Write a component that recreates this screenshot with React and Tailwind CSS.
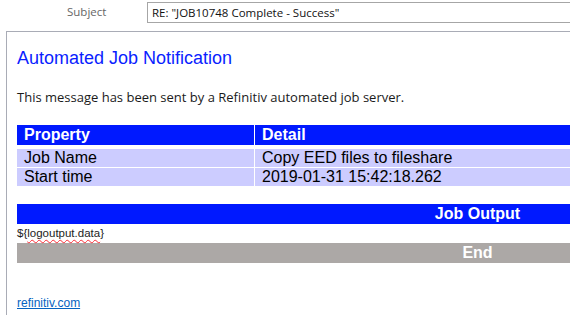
import React from 'react';

const arial = { fontFamily: '"Liberation Sans", Arial, sans-serif' };
const ui = { fontFamily: '"Open Sans", "Noto Sans", sans-serif' };

const rows = [
  { name: 'Job Name', detail: 'Copy EED files to fileshare' },
  { name: 'Start time', detail: '2019-01-31 15:42:18.262' },
];

const App = () => {
  return (
    <div className="w-[570px] h-[315px] overflow-hidden bg-white">
      <div className="h-[31px] pt-[2px] flex items-start" style={ui}>
        <div className="w-[147px] h-[20px] flex items-center pl-[67px] text-[11.5px] text-[#666666]">Subject</div>
        <div className="flex-1 h-[21px] border border-r-0 border-[#a6a6a6] flex items-center pl-[4px] text-[11.5px] text-[#111111]">
          RE: "JOB10748 Complete - Success"
        </div>
      </div>

      <div className="ml-[6px] h-[284px] border-l border-t border-[#a9acb6] pl-[10px] pt-[16px] overflow-hidden">
        <h1 className="text-[18px] leading-[21px] text-[#0a1eff]" style={arial}>Automated Job Notification</h1>

        <p className="mt-[19px] text-[13px] leading-[18px] text-[#1a1a1a]" style={ui}>
          This message has been sent by a Refinitiv automated job server.
        </p>

        <div className="mt-[19px] text-[16px]" style={arial}>
          <div className="flex h-[20px] bg-[#0019ff] text-white font-bold leading-[20px]">
            <div className="w-[238px] pl-[7px] border-r border-white">Property</div>
            <div className="flex-1 pl-[7px]">Detail</div>
          </div>
          <div className="h-[4px]" />
          {rows.map((r, i) => (
            <div key={r.name} className={`flex h-[18px] bg-[#ccccff] text-black leading-[18px] ${i > 0 ? 'mt-px' : ''}`}>
              <div className="w-[238px] pl-[7px] border-r border-white">{r.name}</div>
              <div className="flex-1 pl-[7px]">{r.detail}</div>
            </div>
          ))}
        </div>

        <div className="mt-[18px] w-[921px]" style={arial}>
          <div className="h-[20px] bg-[#0019ff] text-white font-bold text-[16px] leading-[20px] text-center">Job Output</div>
          <div className="h-[19px] text-[11.5px] leading-[19px] text-[#222222]">
            ${'{'}<span className="underline decoration-wavy decoration-red-500 decoration-1 underline-offset-2">logoutput.data</span>{'}'}
          </div>
          <div className="h-[20px] bg-[#aca8a6] text-white font-bold text-[16px] leading-[20px] text-center">End</div>
        </div>

        <div className="mt-[33px] text-[12px] leading-[14px]" style={arial}>
          <a href="#" className="text-[#0563c1] underline">refinitiv.com</a>
        </div>
      </div>
    </div>
  );
};

export default App;
